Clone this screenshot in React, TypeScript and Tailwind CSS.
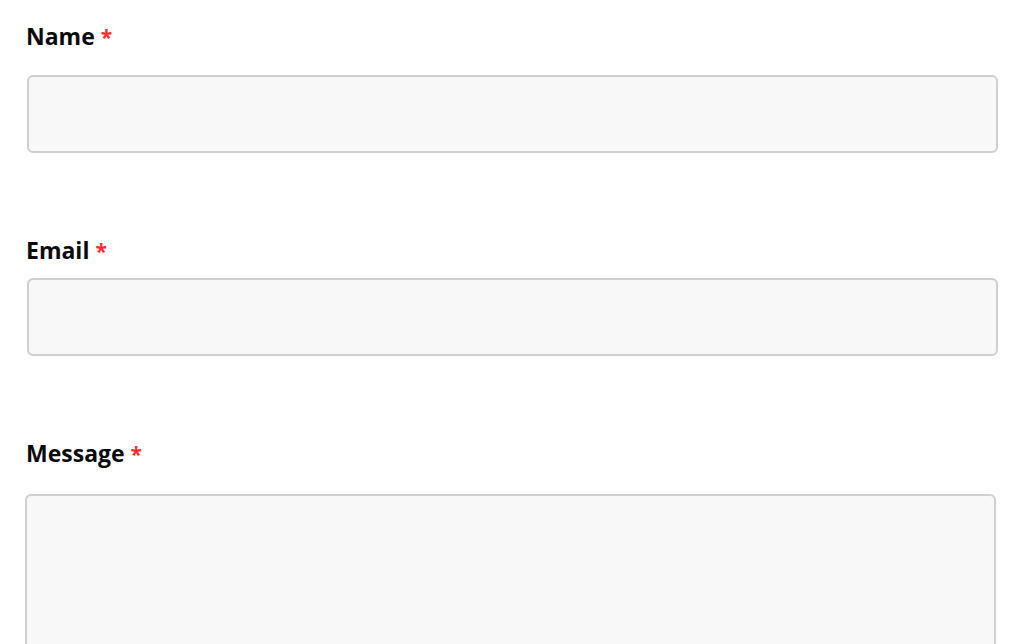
export default function App() {
  return (
    <div className="min-h-screen bg-white text-[#0a0a0a] font-['Open_Sans',sans-serif]">
      <form className="flex flex-col pt-[20px]" onSubmit={e => e.preventDefault()}>
        {/* Name */}
        <label className="ml-[26px] text-[23px] leading-[32px] font-bold">
          Name <span className="text-[#ff2b2b] text-[21px]">*</span>
        </label>
        <input
          type="text"
          className="mt-[22px] ml-[27px] w-[971px] h-[78px] border-2 border-[#cfcfcf] rounded-[6px] bg-[#f8f8f8] outline-none"
        />

        {/* Email */}
        <label className="mt-[81px] ml-[26px] text-[23px] leading-[32px] font-bold">
          Email <span className="text-[#ff2b2b] text-[21px]">*</span>
        </label>
        <input
          type="email"
          className="mt-[11px] ml-[27px] w-[971px] h-[78px] border-2 border-[#cfcfcf] rounded-[6px] bg-[#f8f8f8] outline-none"
        />

        {/* Message */}
        <label className="mt-[81px] ml-[26px] text-[23px] leading-[32px] font-bold">
          Message <span className="text-[#ff2b2b] text-[21px]">*</span>
        </label>
        <textarea
          className="mt-[24px] ml-[25px] w-[971px] h-[220px] border-2 border-[#cfcfcf] rounded-[6px] bg-[#f8f8f8] outline-none resize-none"
        />
      </form>
    </div>
  );
}
